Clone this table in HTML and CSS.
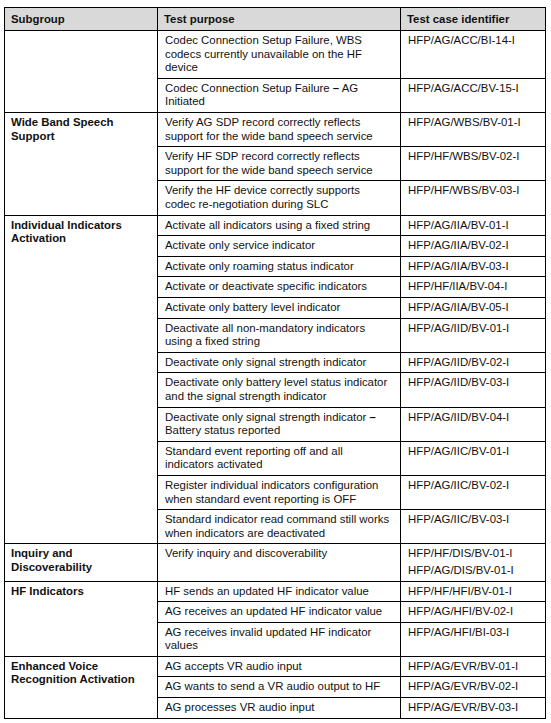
FILE: index.html
```html
<!DOCTYPE html>
<html>
<head>
<meta charset="utf-8">
<link rel="stylesheet" href="styles.css">
</head>
<body>
<table class="tc">
  <colgroup>
    <col class="c1"><col class="c2"><col class="c3">
  </colgroup>
  <thead>
    <tr><th>Subgroup</th><th>Test purpose</th><th>Test case identifier</th></tr>
  </thead>
  <tbody>
    <tr><td rowspan="2" class="sg"></td><td>Codec Connection Setup Failure, WBS<br>codecs currently unavailable on the HF<br>device</td><td>HFP/AG/ACC/BI-14-I</td></tr>
    <tr><td>Codec Connection Setup Failure <span class="dash">–</span> AG<br>Initiated</td><td>HFP/AG/ACC/BV-15-I</td></tr>

    <tr><td rowspan="3" class="sg">Wide Band Speech<br>Support</td><td>Verify AG SDP record correctly reflects<br>support for the wide band speech service</td><td>HFP/AG/WBS/BV-01-I</td></tr>
    <tr><td>Verify HF SDP record correctly reflects<br>support for the wide band speech service</td><td>HFP/HF/WBS/BV-02-I</td></tr>
    <tr><td>Verify the HF device correctly supports<br>codec re-negotiation during SLC</td><td>HFP/HF/WBS/BV-03-I</td></tr>

    <tr><td rowspan="12" class="sg">Individual Indicators<br>Activation</td><td>Activate all indicators using a fixed string</td><td>HFP/AG/IIA/BV-01-I</td></tr>
    <tr><td>Activate only service indicator</td><td>HFP/AG/IIA/BV-02-I</td></tr>
    <tr><td>Activate only roaming status indicator</td><td>HFP/AG/IIA/BV-03-I</td></tr>
    <tr><td>Activate or deactivate specific indicators</td><td>HFP/HF/IIA/BV-04-I</td></tr>
    <tr><td>Activate only battery level indicator</td><td>HFP/AG/IIA/BV-05-I</td></tr>
    <tr><td>Deactivate all non-mandatory indicators<br>using a fixed string</td><td>HFP/AG/IID/BV-01-I</td></tr>
    <tr><td>Deactivate only signal strength indicator</td><td>HFP/AG/IID/BV-02-I</td></tr>
    <tr><td>Deactivate only battery level status indicator<br>and the signal strength indicator</td><td>HFP/AG/IID/BV-03-I</td></tr>
    <tr><td>Deactivate only signal strength indicator <span class="dash">–</span><br>Battery status reported</td><td>HFP/AG/IID/BV-04-I</td></tr>
    <tr><td>Standard event reporting off and all<br>indicators activated</td><td>HFP/AG/IIC/BV-01-I</td></tr>
    <tr><td>Register individual indicators configuration<br>when standard event reporting is OFF</td><td>HFP/AG/IIC/BV-02-I</td></tr>
    <tr><td>Standard indicator read command still works<br>when indicators are deactivated</td><td>HFP/AG/IIC/BV-03-I</td></tr>

    <tr><td class="sg">Inquiry and<br>Discoverability</td><td>Verify inquiry and discoverability</td><td><div>HFP/HF/DIS/BV-01-I</div><div class="second">HFP/AG/DIS/BV-01-I</div></td></tr>

    <tr><td rowspan="3" class="sg">HF Indicators</td><td>HF sends an updated HF indicator value</td><td>HFP/HF/HFI/BV-01-I</td></tr>
    <tr><td>AG receives an updated HF indicator value</td><td>HFP/AG/HFI/BV-02-I</td></tr>
    <tr><td>AG receives invalid updated HF indicator<br>values</td><td>HFP/AG/HFI/BI-03-I</td></tr>

    <tr><td rowspan="3" class="sg">Enhanced Voice<br>Recognition Activation</td><td>AG accepts VR audio input</td><td>HFP/AG/EVR/BV-01-I</td></tr>
    <tr><td>AG wants to send a VR audio output to HF</td><td>HFP/AG/EVR/BV-02-I</td></tr>
    <tr><td>AG processes VR audio input</td><td>HFP/AG/EVR/BV-03-I</td></tr>
  </tbody>
</table>
</body>
</html>
```
FILE: styles.css
```css
html, body {
  margin: 0;
  padding: 0;
  background: #ffffff;
}

.tc {
  border-collapse: collapse;
  table-layout: fixed;
  width: 541px;
  margin: 7px 0 0 4px;
  font-family: "Liberation Sans", Arial, sans-serif;
  font-size: 11.4px;
  line-height: 13.6px;
  color: #111111;
}

.c1 { width: 153px; }
.c2 { width: 243px; }
.c3 { width: 145px; }

.tc th,
.tc td {
  border: 1px solid #000000;
  text-align: left;
  vertical-align: top;
  white-space: nowrap;
  overflow: hidden;
}

.tc th {
  background: #d9d9d9;
  font-weight: bold;
  padding: 4.5px 4px 4px 6px;
}

.tc td {
  padding: 3px 3px 3px 7px;
}

.tc td.sg {
  font-weight: bold;
  padding-left: 6px;
}

.dash {
  font-weight: bold;
}

.second {
  margin-top: 3px;
}
```
